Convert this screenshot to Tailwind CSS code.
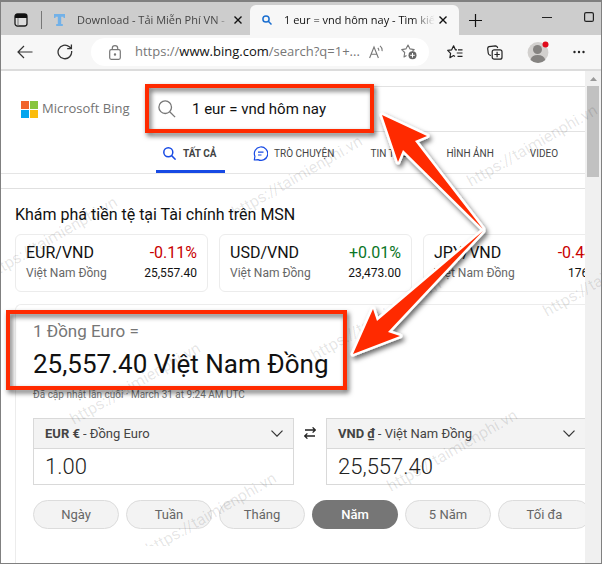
<!DOCTYPE html>
<html lang="vi">
  <head>
    <meta charset="UTF-8" />
    <meta name="viewport" content="width=device-width, initial-scale=1.0" />
    <title>1 eur = vnd hôm nay - Tìm kiếm</title>
    <!-- Include Tailwind CSS -->
    <script src="https://cdn.jsdelivr.net/npm/@tailwindcss/browser@4"></script>
  </head>
  <body class="relative flex h-screen flex-col overflow-hidden border border-t-2 border-[#808080] bg-white font-['Roboto',sans-serif] text-[#111]">
    <!-- Tab strip -->
    <div class="flex h-[33px] shrink-0 items-end bg-[#cdcdcd] font-['Open_Sans',sans-serif] text-[11px]">
      <button class="flex h-[30px] w-10 items-center justify-center" aria-label="Tab actions">
        <svg class="h-[14px] w-[14px]" viewBox="0 0 14 14">
          <rect x="1" y="1" width="12" height="12" rx="2.5" fill="#ddd" stroke="#1b1b1b" stroke-width="1.3" />
          <path d="M1 5V3.200A2.200 2.200 0 0 1 3.200 1h7.600A2.200 2.200 0 0 1 13 3.200V5z" fill="#111" />
          <path d="M4 5v8" stroke="#777" />
        </svg>
      </button>
      <div class="flex h-[30px] w-[209px] items-center pr-1">
        <span class="h-[18px] w-px bg-[#777]"></span>
        <svg class="ml-3 h-3 w-[11px] shrink-0" viewBox="0 0 11 12">
          <path d="M0 0h11v4H9.500V2.800H7.200V10h1.600v2H2.200v-2h1.600V2.800H1.500V4H0z" fill="#72b1e8" />
        </svg>
        <span class="ml-3 flex-1 overflow-hidden whitespace-nowrap text-[#444] mask-r-from-90%">Download - Tải Miễn Phí VN -</span>
        <button class="p-1" aria-label="Close tab">
          <svg class="h-2 w-2" viewBox="0 0 8 8"><path d="M.5.5l7 7M7.500.5l-7 7" stroke="#111" stroke-width="1.400" /></svg>
        </button>
      </div>
      <div class="flex h-[30px] w-[209px] items-center rounded-t-md bg-[#f7f7f7] pr-2 pl-3">
        <svg class="h-[10px] w-[10px] shrink-0" viewBox="0 0 10 10" fill="none" stroke="#1b6fd0" stroke-width="1.500">
          <circle cx="4" cy="4" r="3.100" /><path d="M6.300 6.300L9.500 9.500" />
        </svg>
        <span class="ml-3 flex-1 overflow-hidden whitespace-nowrap mask-r-from-85%">1 eur = vnd hôm nay - Tìm kiế</span>
        <button class="p-1" aria-label="Close tab">
          <svg class="h-2 w-2" viewBox="0 0 8 8"><path d="M.5.5l7 7M7.500.5l-7 7" stroke="#111" stroke-width="1.400" /></svg>
        </button>
      </div>
      <button class="flex h-[30px] w-8 items-center justify-center" aria-label="New tab">
        <svg class="h-[13px] w-[13px]" viewBox="0 0 13 13"><path d="M6.500 0v13M0 6.500h13" stroke="#111" stroke-width="1.200" /></svg>
      </button>
      <div class="ml-auto flex items-center gap-8 pr-[7px] pb-[13px]">
        <button aria-label="Minimize">
          <svg class="h-[10px] w-[10px]" viewBox="0 0 10 10"><path d="M0 5.500h10" stroke="#222" /></svg>
        </button>
        <button aria-label="Maximize">
          <svg class="h-[10px] w-[10px]" viewBox="0 0 10 10"><rect x=".6" y=".6" width="8.800" height="8.800" rx="1.500" fill="none" stroke="#222" stroke-width="1.200" /></svg>
        </button>
      </div>
    </div>

    <!-- Toolbar -->
    <div class="flex h-9 shrink-0 items-center border-b-2 border-[#dcdcdc] bg-[#f7f7f7] pr-3 pl-4">
      <button aria-label="Back">
        <svg class="h-[14px] w-4" viewBox="0 0 16 14" fill="none" stroke="#333" stroke-width="1.200"><path d="M15.500 7H1M7 1L1 7l6 6" /></svg>
      </button>
      <button class="ml-6" aria-label="Refresh">
        <svg class="h-4 w-4" viewBox="0 0 16 16" fill="none" stroke="#333" stroke-width="1.300"><path d="M14.600 7a6.800 6.800 0 1 1-2.300-4.200L14.300 4.500M14.400.5v4.200h-4.200" /></svg>
      </button>
      <div class="ml-[18px] flex h-7 flex-1 items-center rounded-full bg-white pr-3 pl-[18px]">
        <svg class="h-[15px] w-3 shrink-0" viewBox="0 0 12 15" fill="none" stroke="#777" stroke-width="1.200">
          <rect x=".7" y="4.700" width="10.600" height="9.600" rx="1.500" /><path d="M3.300 4.700V3.300a2.700 2.700 0 0 1 5.400 0v1.400" /><circle cx="6" cy="9.500" r=".6" fill="#666" />
        </svg>
        <a href="#" class="ml-[14px] flex-1 whitespace-nowrap font-['Open_Sans',sans-serif] text-[13px] text-[#777]">https://<span class="text-[#111]">www.bing.com</span>/search?q=1+...</a>
        <button aria-label="Read aloud">
          <svg class="h-[14px] w-[14px]" viewBox="0 0 14 14" fill="none" stroke="#777" stroke-width="1.100"><path d="M.6 13L5 2l4.400 11M2.200 9.200h5.600M8.800 2.800q1.200 1.200 1 3M11 .8q2.600 2.200 2 5.400" /></svg>
        </button>
        <button class="ml-[18px]" aria-label="Add to favorites">
          <svg class="h-4 w-4" viewBox="0 0 16 16"><path d="M5.500 11.500L3 13l.7-4.500L.7 5.600l4.200-.7L7 1l2 3.900 4.200.7-2 1.900" fill="none" stroke="#777" stroke-width="1.100" stroke-linejoin="round" /><circle cx="11.500" cy="11.300" r="4" fill="#666" /><path d="M11.500 9v4.600M9.200 11.300h4.600" stroke="#fff" /></svg>
        </button>
      </div>
      <div class="ml-[18px] flex items-center gap-6 pr-1">
        <button aria-label="Favorites">
          <svg class="h-[14px] w-4" viewBox="0 0 16 14" fill="none" stroke="#222" stroke-width="1.200" stroke-linejoin="round"><path d="M10 4.800H8.400L6.600.8 4.700 4.800.7 5.400l2.900 2.900-.7 4.400 3.700-2.100 1.400.8M11 4.800h4.500M9.800 8h5.700M10.500 11.300h5" /></svg>
        </button>
        <button aria-label="Collections">
          <svg class="h-[15px] w-4" viewBox="0 0 16 15" fill="none" stroke="#222" stroke-width="1.200"><rect x="5.200" y="4.800" width="9.800" height="9.400" rx="2" /><path d="M10.100 6.800v5.400M7.400 9.500h5.400M4 10.500L2.600 10Q1.400 9.500 1.200 8L.7 3.700Q.6 2 2 1.600L8.500.8q1.300 0 1.800 1.200l.4 1" /></svg>
        </button>
        <button aria-label="Profile">
          <svg class="h-[22px] w-[22px]" viewBox="0 0 22 22"><circle cx="11" cy="11.500" r="10.400" fill="#d2d0ce" /><circle cx="10.500" cy="8.500" r="4.500" fill="#858381" /><path d="M3.500 19q1-5 7.200-5t7.600 5q-3 3-7.300 3T3.500 19z" fill="#858381" /><circle cx="18.500" cy="3.500" r="3" fill="#e00b1c" /></svg>
        </button>
        <button aria-label="More">
          <svg class="h-1 w-3" viewBox="0 0 12 4" fill="#222"><circle cx="1.500" cy="2" r="1.200" /><circle cx="6" cy="2" r="1.200" /><circle cx="10.500" cy="2" r="1.200" /></svg>
        </button>
      </div>
    </div>

    <div class="flex min-h-0 flex-1">
      <main class="min-w-0 flex-1 overflow-hidden">
        <!-- Search header -->
        <header class="border-b border-[#e5e5e5]">
          <div class="flex items-center pt-[15px] pl-5">
            <a href="#" class="flex w-[126px] shrink-0 items-center gap-1 whitespace-nowrap font-['Open_Sans',sans-serif] text-[13px] font-medium text-[#737373]">
              <svg class="h-[17px] w-[17px] shrink-0" viewBox="0 0 17 17"><path d="M0 0h8v8H0z" fill="#f1642c" /><path d="M9 0h8v8H9z" fill="#89c53e" /><path d="M0 9h8v8H0z" fill="#04a5ee" /><path d="M9 9h8v8H9z" fill="#fbbc0c" /></svg>
              Microsoft Bing
            </a>
            <form class="flex h-[46px] flex-1 items-center rounded-l-lg border border-r-0 border-[#e2e2e2] pl-[10px]">
              <svg class="h-[18px] w-[18px] shrink-0" viewBox="0 0 18 18" fill="none" stroke="#777" stroke-width="1.300"><circle cx="7.200" cy="7.200" r="6.300" /><path d="M11.700 11.700l5.400 5.400" /></svg>
              <input type="text" value="1 eur = vnd hôm nay" aria-label="Tìm kiếm" class="ml-4 min-w-0 flex-1 text-[15px] focus:outline-none" />
            </form>
          </div>
          <nav class="flex h-[41px] items-stretch pl-[155px] text-[10px] text-[#444]">
            <a href="#" class="flex w-[69px] items-center gap-[7px] whitespace-nowrap border-b-3 border-[#174ae4] pt-1 pl-[7px] font-bold">
              <svg class="h-[13px] w-[13px] shrink-0" viewBox="0 0 13 13" fill="none" stroke="#174ae4" stroke-width="1.500"><circle cx="5.300" cy="5.300" r="4.500" /><path d="M8.600 8.600l4 4" /></svg>
              TẤT CẢ
            </a>
            <a href="#" class="ml-7 flex items-center gap-1.5 whitespace-nowrap border-b-3 border-transparent pt-1">
              <svg class="h-[15px] w-[15px]" viewBox="0 0 15 15" fill="none" stroke="#174ae4" stroke-width="1.200"><path d="M1.300 14l.6-3.700A6.700 6.700 0 1 1 5 13.600zM5 6.200h5.500M5 9h3.500" stroke-linejoin="round" /></svg>
              TRÒ CHUYỆN
            </a>
            <a href="#" class="ml-9 flex w-[76px] items-center whitespace-nowrap border-b-3 border-transparent pt-1">TIN TỨC</a>
            <a href="#" class="flex items-center whitespace-nowrap border-b-3 border-transparent pt-1">HÌNH ẢNH</a>
            <a href="#" class="ml-9 flex items-center border-b-3 border-transparent pt-1">VIDEO</a>
          </nav>
        </header>
        <div class="h-[15px] border-b border-[#e0e0e0]"></div>

        <!-- Currency cards -->
        <h1 class="pt-4 pl-[14px] text-base leading-5">Khám phá tiền tệ tại Tài chính trên MSN</h1>
        <div class="mt-[9px] flex gap-[11px] pl-[14px]">
          <a href="#" class="w-[193px] shrink-0 rounded-md border border-[#ececec] px-[10px] py-2">
            <div class="flex justify-between text-base leading-5"><span>EUR/VND</span><span class="text-[#c80000]">-0.11%</span></div>
            <div class="flex justify-between text-xs leading-5"><span class="text-[#666]">Việt Nam Đồng</span><span>25,557.40</span></div>
          </a>
          <a href="#" class="w-[193px] shrink-0 rounded-md border border-[#ececec] px-[10px] py-2">
            <div class="flex justify-between text-base leading-5"><span>USD/VND</span><span class="text-[#0a7526]">+0.01%</span></div>
            <div class="flex justify-between text-xs leading-5"><span class="text-[#666]">Việt Nam Đồng</span><span>23,473.00</span></div>
          </a>
          <a href="#" class="w-[193px] shrink-0 rounded-md border border-[#ececec] px-[10px] py-2">
            <div class="flex justify-between text-base leading-5"><span>JPY/VND</span><span class="text-[#c80000]">-0.44%</span></div>
            <div class="flex justify-between text-xs leading-5"><span class="text-[#666]">Việt Nam Đồng</span><span>176.56</span></div>
          </a>
        </div>

        <!-- Converter -->
        <section class="mt-3 ml-[14px] h-full rounded-tl-md border-t border-l border-[#ececec] pt-4 pl-[17px]">
          <p class="text-[17px] leading-5 text-[#767676]">1 Đồng Euro =</p>
          <p class="mt-[5px] text-[26px] leading-9">25,557.40 Việt Nam Đồng</p>
          <p class="mt-[5px] text-[10px] leading-4 text-[#767676]">Đã cập nhật lần cuối · March 31 at 9:24 AM UTC</p>
          <div class="mt-[15px] flex">
            <div class="w-[261px] shrink-0 border border-[#d9d9d9]">
              <div class="flex h-[30px] items-center border-b border-[#d9d9d9] bg-[#f3f3f3] pr-[10px] pl-[11px] text-[13px] text-[#444]">
                <label for="from-currency" class="font-bold">EUR €</label>
                <select id="from-currency" class="ml-[3px] flex-1 appearance-none"><option>- Đồng Euro</option></select>
                <svg class="h-[7px] w-3" viewBox="0 0 12 7" fill="none" stroke="#333" stroke-width="1.200"><path d="M.5.7L6 6.200 11.500.7" /></svg>
              </div>
              <input type="text" value="1.00" aria-label="EUR" class="h-[35px] w-full pl-[11px] text-[22px] font-light text-[#222]" />
            </div>
            <button class="flex h-[30px] w-8 shrink-0 items-center justify-center" aria-label="Đổi">
              <svg class="h-3 w-3" viewBox="0 0 12 12" fill="none" stroke="#222" stroke-width="1.300"><path d="M1 3h10.300M8.600.4L11.300 3 8.600 5.600M11 9H.7M3.400 6.400L.7 9l2.700 2.600" /></svg>
            </button>
            <div class="min-w-0 flex-1 border border-r-0 border-[#d9d9d9]">
              <div class="flex h-[30px] items-center border-b border-[#d9d9d9] bg-[#f3f3f3] pr-[10px] pl-[11px] text-[13px] text-[#444]">
                <label for="to-currency" class="font-bold">VND ₫</label>
                <select id="to-currency" class="ml-[3px] flex-1 appearance-none"><option>- Việt Nam Đồng</option></select>
                <svg class="h-[7px] w-3" viewBox="0 0 12 7" fill="none" stroke="#333" stroke-width="1.200"><path d="M.5.7L6 6.200 11.500.7" /></svg>
              </div>
              <input type="text" value="25,557.40" aria-label="VND" class="h-[35px] w-full pl-[11px] text-[22px] font-light text-[#222]" />
            </div>
          </div>
          <div class="mt-[15px] flex gap-[7px] text-[13px] text-[#666]">
            <button class="h-[29px] w-[86px] shrink-0 rounded-full border border-[#dcdcdc] bg-[#f3f3f3]">Ngày</button>
            <button class="h-[29px] w-[86px] shrink-0 rounded-full border border-[#dcdcdc] bg-[#f3f3f3]">Tuần</button>
            <button class="h-[29px] w-[86px] shrink-0 rounded-full border border-[#dcdcdc] bg-[#f3f3f3]">Tháng</button>
            <button class="h-[29px] w-[86px] shrink-0 rounded-full bg-[#767676] font-medium text-white">Năm</button>
            <button class="h-[29px] w-[86px] shrink-0 rounded-full border border-[#dcdcdc] bg-[#f3f3f3]">5 Năm</button>
            <button class="h-[29px] w-[93px] shrink-0 rounded-full border border-[#dcdcdc] bg-[#f3f3f3]">Tối đa</button>
          </div>
        </section>
      </main>

      <!-- Scrollbar -->
      <div class="flex w-4 shrink-0 flex-col items-center bg-[#f0f0f0]">
        <div class="flex h-[15px] items-center">
          <svg class="h-1 w-[7px]" viewBox="0 0 7 4"><path d="M0 4L3.500 0 7 4z" fill="#999" /></svg>
        </div>
        <div class="h-[91px] w-3 bg-[#c1c1c1]"></div>
      </div>
    </div>

    <!-- Watermarks, highlight boxes and arrows on top of the page -->
    <svg class="pointer-events-none absolute -top-0.5 -left-px h-[564px] w-[602px]" viewBox="0 0 602 564">
      <defs>
        <filter id="shadow" x="-10%" y="-20%" width="125%" height="150%">
          <feDropShadow dx="2" dy="3" stdDeviation="2.500" flood-color="#000" flood-opacity=".6" />
        </filter>
        <clipPath id="page"><path d="M1 71h600v475H1z" /></clipPath>
      </defs>
      <g clip-path="url(#page)" font-family="Roboto, sans-serif" font-size="16" fill="#000" fill-opacity=".11">
        <text transform="translate(471 187) rotate(-30)">https://taimienphi.vn</text>
        <text transform="translate(236 218) rotate(-30)">https://taimienphi.vn</text>
        <text transform="translate(-9 279) rotate(-30)">https://taimienphi.vn</text>
        <text transform="translate(547 317) rotate(-30)">https://taimienphi.vn</text>
        <text transform="translate(315 361) rotate(-30)">https://taimienphi.vn</text>
        <text transform="translate(74 425) rotate(-30)">https://taimienphi.vn</text>
        <text transform="translate(391 492) rotate(-30)">https://taimienphi.vn</text>
        <text transform="translate(150 555) rotate(-30)">https://taimienphi.vn</text>
      </g>
      <g fill="none" stroke="#ff2a00" stroke-width="4" filter="url(#shadow)">
        <rect x="147" y="86" width="225" height="45" />
        <rect x="8" y="312" width="337" height="76" />
      </g>
      <g fill="#ff2a00" stroke="#fff" stroke-width="5" stroke-linejoin="round" paint-order="stroke" filter="url(#shadow)">
        <path d="M382 115L427 136 415 141 483 229 403 150 398 162z" />
        <path d="M353 354L373 309 377 321 483 231 388 332 400 336z" />
      </g>
    </svg>
  </body>
</html>
